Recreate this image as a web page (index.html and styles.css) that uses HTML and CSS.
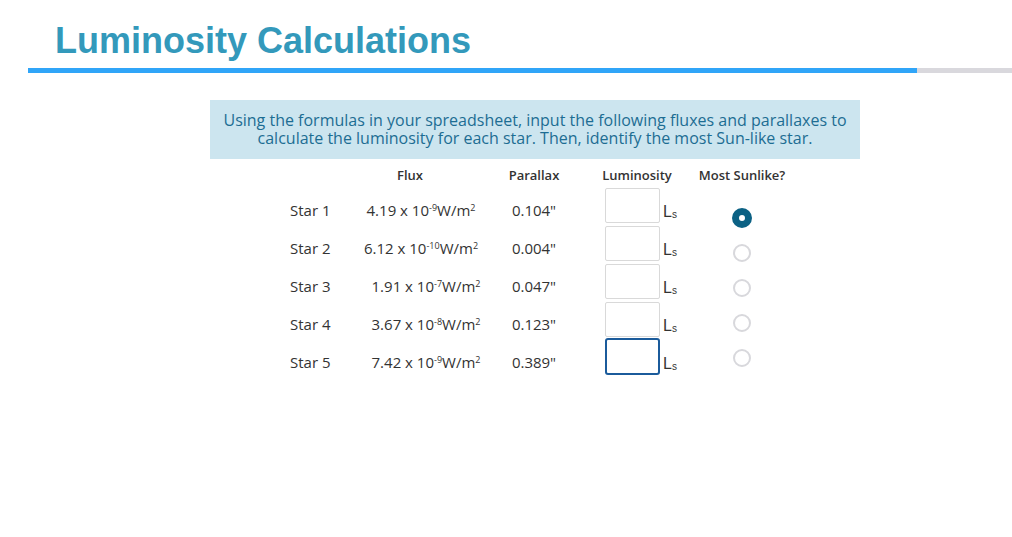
FILE: index.html
```html
<!DOCTYPE html>
<html lang="en">
<head>
    <meta charset="UTF-8">
    <meta name="viewport" content="width=device-width, initial-scale=1.0">
    <title>Luminosity Calculations</title>
    <link rel="stylesheet" href="styles.css">
</head>
<body>
    <div class="page">
        <h1 class="title">Luminosity Calculations</h1>

        <div class="progress">
            <div class="progress-done"></div>
            <div class="progress-left"></div>
        </div>

        <div class="instructions">
            Using the formulas in your spreadsheet, input the following fluxes and parallaxes to
            calculate the luminosity for each star. Then, identify the most Sun-like star.
        </div>

        <div class="calc">
            <div class="calc-grid">
                <div class="head"></div>
                <div class="head center flux-head">Flux</div>
                <div class="head center">Parallax</div>
                <div class="head center lum-head">Luminosity</div>

                <div class="cell">Star 1</div>
                <div class="cell center">4.19 x 10<sup>-9</sup>W/m<sup>2</sup></div>
                <div class="cell center">0.104"</div>
                <div class="lum"><input type="text" class="lum-input"><span class="unit">L<sub>s</sub></span></div>

                <div class="cell">Star 2</div>
                <div class="cell center">6.12 x 10<sup>-10</sup>W/m<sup>2</sup></div>
                <div class="cell center">0.004"</div>
                <div class="lum"><input type="text" class="lum-input"><span class="unit">L<sub>s</sub></span></div>

                <div class="cell">Star 3</div>
                <div class="cell center shift">1.91 x 10<sup>-7</sup>W/m<sup>2</sup></div>
                <div class="cell center">0.047"</div>
                <div class="lum"><input type="text" class="lum-input"><span class="unit">L<sub>s</sub></span></div>

                <div class="cell">Star 4</div>
                <div class="cell center shift">3.67 x 10<sup>-8</sup>W/m<sup>2</sup></div>
                <div class="cell center">0.123"</div>
                <div class="lum"><input type="text" class="lum-input"><span class="unit">L<sub>s</sub></span></div>

                <div class="cell">Star 5</div>
                <div class="cell center shift">7.42 x 10<sup>-9</sup>W/m<sup>2</sup></div>
                <div class="cell center">0.389"</div>
                <div class="lum"><input type="text" class="lum-input focused"><span class="unit">L<sub>s</sub></span></div>
            </div>

            <div class="sunlike">
                <div class="head center">Most Sunlike?</div>
                <div class="radios">
                    <span class="radio checked"></span>
                    <span class="radio"></span>
                    <span class="radio"></span>
                    <span class="radio"></span>
                    <span class="radio"></span>
                </div>
            </div>
        </div>
    </div>
</body>
</html>
```

FILE: styles.css
```css
body {
    margin: 0;
    background: #ffffff;
    font-family: "Open Sans", sans-serif;
    color: #333333;
}

.page {
    padding-top: 19px;
}

.title {
    margin: 0 0 0 55px;
    font-family: "Liberation Sans", Arial, sans-serif;
    font-size: 36px;
    font-weight: bold;
    line-height: 44px;
    color: #3399bb;
}

.progress {
    display: flex;
    margin: 5px 0 0 28px;
    height: 5px;
}

.progress-done {
    width: 889px;
    background-color: #30a5f8;
}

.progress-left {
    flex-grow: 1;
    background-color: #d9d8dd;
}

.instructions {
    width: 650px;
    margin: 27px 0 0 210px;
    padding: 11px 0 12px;
    box-sizing: border-box;
    background-color: #cce5ef;
    color: #1d6d93;
    font-size: 16px;
    line-height: 18px;
    text-align: center;
}

.calc {
    display: flex;
    margin: 3px 0 0 290px;
}

.calc-grid {
    display: grid;
    grid-template-columns: 55px 152px 74px 108px;
    grid-template-rows: 23px repeat(5, 35px);
    row-gap: 3px;
}

.head {
    padding-top: 3px;
    font-size: 13px;
    font-weight: 600;
    line-height: 20px;
    color: #333333;
}

.center {
    text-align: center;
}

.flux-head {
    padding-right: 22px;
}

.lum-head {
    padding-left: 24px;
}

.cell {
    align-self: end;
    padding-bottom: 3px;
    font-size: 15px;
    line-height: 20px;
    color: #333333;
}

.shift {
    padding-left: 10px;
}

.cell sup {
    font-size: 9px;
    line-height: 0;
    vertical-align: 5px;
}

.lum {
    display: flex;
    align-items: flex-end;
}

.lum-input {
    width: 55px;
    height: 35px;
    margin: 0 0 0 34px;
    padding: 0;
    box-sizing: border-box;
    border: 1px solid #d9d9d9;
    border-radius: 2px;
    background: #ffffff;
}

.lum-input.focused {
    height: 37px;
    border: 2px solid #1b5b9b;
    border-radius: 3px;
}

.unit {
    margin: 0 0 0 3px;
    font-family: "Liberation Sans", Arial, sans-serif;
    font-size: 16px;
    line-height: 16px;
    color: #333333;
}

.unit sub {
    font-size: 10px;
    vertical-align: -1px;
}

.sunlike {
    width: 126px;
}

.radios {
    display: flex;
    flex-direction: column;
    align-items: center;
    padding-top: 23px;
}

.radio {
    display: block;
    width: 18px;
    height: 18px;
    box-sizing: border-box;
    border: 2px solid #d8d8dc;
    border-radius: 50%;
    background: #ffffff;
    margin-bottom: 17px;
}

.radio.checked {
    width: 20px;
    height: 20px;
    border: 7px solid #0b6184;
    margin-bottom: 16px;
}
```
